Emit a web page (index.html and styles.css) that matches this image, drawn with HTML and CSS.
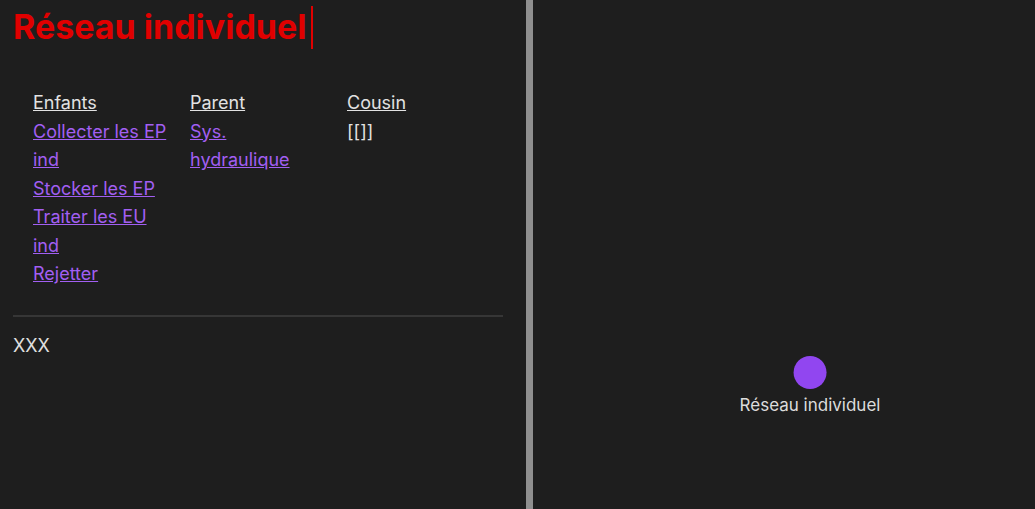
FILE: index.html
```html
<!DOCTYPE html>
<html lang="fr">
<head>
<meta charset="utf-8">
<title>Réseau individuel</title>
<link rel="stylesheet" href="styles.css">
</head>
<body>
<div class="app">
  <section class="editor">
    <h1 class="title">Réseau individuel<span class="caret"></span></h1>
    <div class="relations">
      <div class="col">
        <a class="head" href="#">Enfants</a>
        <a class="link" href="#">Collecter les EP ind</a>
        <a class="link" href="#">Stocker les EP</a>
        <a class="link" href="#">Traiter les EU ind</a>
        <a class="link" href="#">Rejetter</a>
      </div>
      <div class="col">
        <a class="head" href="#">Parent</a>
        <a class="link" href="#">Sys. hydraulique</a>
      </div>
      <div class="col">
        <a class="head" href="#">Cousin</a>
        <span class="plain">[[]]</span>
      </div>
    </div>
    <hr class="rule">
    <p class="body-text">XXX</p>
  </section>
  <div class="splitter"></div>
  <section class="graph">
    <div class="node">
      <span class="dot"></span>
      <span class="label">Réseau individuel</span>
    </div>
  </section>
</div>
</body>
</html>
```
FILE: styles.css
```css
html, body {
  margin: 0;
  padding: 0;
  background: #1e1e1e;
  font-family: Inter, "Noto Sans", "Liberation Sans", sans-serif;
  color: #dcdcdc;
}
.app {
  display: flex;
  width: 1035px;
  height: 509px;
  overflow: hidden;
}
.editor {
  width: 526px;
  box-sizing: border-box;
  padding: 0 23px 0 13px;
}
.title {
  margin: 4px 0 0 0;
  font-size: 34px;
  line-height: 46px;
  font-weight: 700;
  color: #e00000;
  letter-spacing: 0;
  display: flex;
  align-items: center;
}
.caret {
  display: inline-block;
  width: 2px;
  height: 43px;
  background: #e00000;
  margin-left: 5px;
}
.relations {
  display: grid;
  grid-template-columns: 136px 136px 136px;
  column-gap: 21px;
  padding-left: 20px;
  margin-top: 39px;
  font-size: 18px;
  line-height: 28.5px;
}
.col {
  display: flex;
  flex-direction: column;
  align-items: flex-start;
}
.head {
  color: #e2e2e2;
  text-decoration: underline;
}
.link {
  color: #a25ff2;
  text-decoration: underline;
}
.plain {
  color: #e2e2e2;
}
.rule {
  border: 0;
  height: 2px;
  background: #363636;
  margin: 26px 0 0 0;
}
.body-text {
  margin: 17px 0 0 0;
  font-size: 18px;
  line-height: 24px;
  color: #e0e0e0;
}
.splitter {
  width: 7px;
  background: #8f8f8f;
  flex: none;
}
.graph {
  flex: 1;
  position: relative;
}
.node {
  position: absolute;
  left: 277px;
  top: 356px;
  transform: translateX(-50%);
  display: flex;
  flex-direction: column;
  align-items: center;
}
.dot {
  width: 33px;
  height: 33px;
  border-radius: 50%;
  background: #9146f0;
}
.label {
  margin-top: 6px;
  font-size: 17px;
  line-height: 20px;
  color: #dcdcdc;
}
```
